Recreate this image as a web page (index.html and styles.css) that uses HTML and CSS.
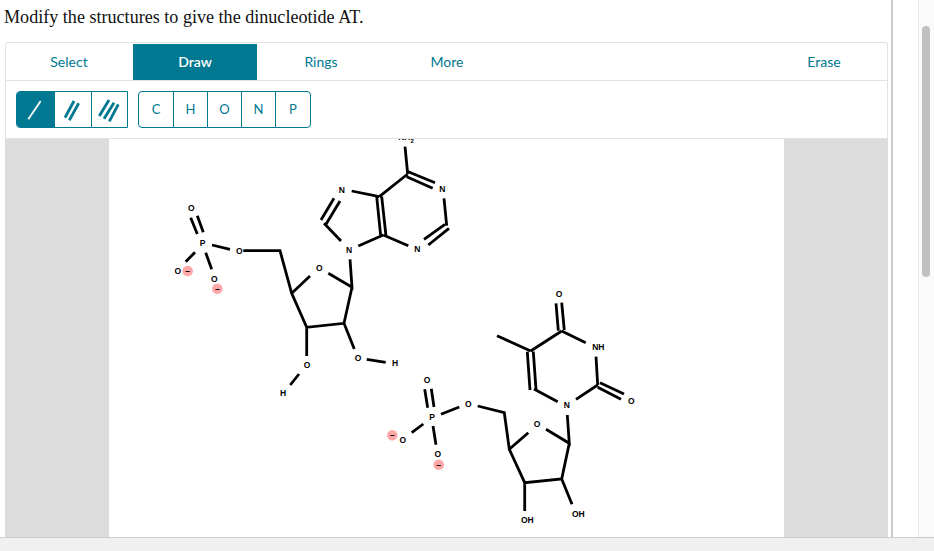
FILE: index.html
```html
<!DOCTYPE html>
<html lang="en">
<head>
<meta charset="utf-8">
<title>Modify the structures</title>
<link rel="stylesheet" href="styles.css">
</head>
<body>
<div class="window">
  <div class="main">
    <div class="content">
      <h1 class="question">Modify the structures to give the dinucleotide AT.</h1>
      <div class="editor">
        <nav class="tabs">
          <button class="tab">Select</button>
          <button class="tab is-active"><span>Draw</span></button>
          <button class="tab">Rings</button>
          <button class="tab">More</button>
          <button class="tab tab-end">Erase</button>
        </nav>
        <div class="tools">
          <div class="group bonds">
            <button class="tool bond is-active" aria-label="Single bond">
              <svg width="38" height="37" viewBox="0 0 38 37"><path d="M12.300 28.300L24.700 10"/></svg>
            </button>
            <button class="tool bond" aria-label="Double bond">
              <svg width="37" height="37" viewBox="0 0 37 37"><path d="M11 26.700L20 10M15.300 29.300L24.700 12.300"/></svg>
            </button>
            <button class="tool bond" aria-label="Triple bond">
              <svg width="37" height="37" viewBox="0 0 37 37"><path d="M8.300 25L18 9M13 27.700L23 11.700M18.300 30.300L27.300 13.300"/></svg>
            </button>
          </div>
          <div class="group atoms">
            <button class="tool atom">C</button>
            <button class="tool atom">H</button>
            <button class="tool atom">O</button>
            <button class="tool atom">N</button>
            <button class="tool atom">P</button>
          </div>
        </div>
        <div class="stage">
          <svg class="canvas" width="675" height="398" viewBox="109 139 675 398">
            <path class="bond-line" d="M405 146.700L407.700 174M408.300 171.700L435 182.700M406.700 176.700L432.700 188.300M407.700 174L379.300 196.700M376.700 196.700L380.700 236M381.700 196.700L386 236M379.300 196.700L351.700 191M334 198.300L321 220M340 201L326 224.300M324 223.300L341 241M358.300 246L383.300 235M383.300 235L408.300 245.700M424 239.300L445 224.300M428.300 245L449 228.300M446.700 225.700L444 198.300M350 259.300L352 287.300L328.300 273.300M310 276L291.700 293.300L306.700 327.300L344 323.300L352 287.300M291.700 293.300L280 250.700L243.300 250.700M230 249.300L212 245M190.700 217.700L197.300 234M197.300 215.700L203.300 232.300M195 252.300L185.700 261.700M205.700 252.700L211.700 269.300M306.700 327.300L306.700 356M344 323.300L354.300 349M366.700 359.300L385.700 362.300M299 374L290.300 385"/>
            <path class="bond-line" d="M556 303.300L558.300 330.700M561.700 302.700L564.300 330M561.700 331L585.700 342.700M596 356.700L597.700 385M600 382.700L624 394M597.700 387.300L621 399.300M597.700 385L576 399.300M557.700 401.700L534 389M536 389.300L533.300 351.700M530 390L527.300 351.700M530.700 351L561.700 331M530.700 351L497 335.700M567.300 415L569.300 443.300L546 429.300M528.300 432.700L509.300 449.300L524.700 482.700L561.700 479L569.300 443.300M509.300 449.300L504.300 412.700L477.700 406M459.300 407L441 414.300M424.700 389.300L427.700 407.700M431.300 388.700L434 407M423.300 424L411.700 432.700M433 426L436 444.700M524.700 482.700L524.700 511M561.700 479L572 504.300"/>
            <g class="charge">
              <circle cx="187.700" cy="271" r="5.300"/>
              <circle cx="217.300" cy="288.700" r="5.300"/>
              <circle cx="392.300" cy="435.300" r="5.300"/>
              <circle cx="438.700" cy="464.700" r="5.300"/>
            </g>
            <g class="atom-label">
              <text x="406" y="140.300">NH<tspan class="sub" dy="2.200">2</tspan></text>
              <text x="191.300" y="211">O</text>
              <text x="202.700" y="246.300">P</text>
              <text x="239.300" y="254">O</text>
              <text x="177.700" y="274">O</text>
              <text x="187.700" y="274">–</text>
              <text x="214.300" y="282">O</text>
              <text x="217.300" y="291.700">–</text>
              <text x="319.300" y="271">O</text>
              <text x="349" y="253.300">N</text>
              <text x="341.700" y="193.300">N</text>
              <text x="442.300" y="192">N</text>
              <text x="417.300" y="252">N</text>
              <text x="307" y="368">O</text>
              <text x="283" y="396">H</text>
              <text x="358" y="361">O</text>
              <text x="395" y="366">H</text>
              <text x="559" y="297">O</text>
              <text x="598.300" y="350">NH</text>
              <text x="631.300" y="404">O</text>
              <text x="566.700" y="408">N</text>
              <text x="537" y="427">O</text>
              <text x="578.300" y="517">OH</text>
              <text x="527.300" y="523">OH</text>
              <text x="427" y="383">O</text>
              <text x="432" y="420">P</text>
              <text x="468.300" y="407.300">O</text>
              <text x="402.700" y="443.300">O</text>
              <text x="392.300" y="438.300">–</text>
              <text x="437.700" y="457">O</text>
              <text x="438.700" y="467.700">–</text>
            </g>
          </svg>
        </div>
      </div>
    </div>
    <div class="rule"></div>
    <div class="gutter"></div>
    <div class="scrollbar"><div class="thumb"></div></div>
  </div>
  <div class="footer"></div>
</div>
</body>
</html>
```
FILE: styles.css
```css
* { box-sizing: border-box; }
html, body { margin: 0; padding: 0; height: 100%; overflow: hidden; background: #fff; }
.window { display: flex; flex-direction: column; width: 934px; height: 551px; }
.main { display: flex; height: 538px; border-bottom: 1px solid #ccc; }
.content { width: 891px; padding: 0 3px 0 5px; display: flex; flex-direction: column; }
.question {
  margin: 0 0 0 -1px;
  height: 42px;
  padding-top: 6px;
  font: 400 18.100px/22px "Liberation Serif", "Times New Roman", serif;
  color: #111;
}
.editor {
  flex: 1;
  display: flex;
  flex-direction: column;
  min-height: 0;
  border: 1px solid #e2e2e2;
  border-bottom: 0;
  border-radius: 3px 3px 0 0;
}
.tabs { display: flex; height: 38px; padding-top: 1px; border-bottom: 1px solid #e2e2e2; }
.tab {
  width: 126px;
  height: 36px;
  padding: 0;
  border: 0;
  background: none;
  color: #007891;
  font: 400 14px/36px "Lato", sans-serif;
}
.tab.is-active { padding: 0 1px; color: #fff; font-weight: 600; }
.tab.is-active span { display: block; background: #007891; }
.tab-end { margin-left: auto; }
.tools { display: flex; gap: 10px; height: 57px; padding: 10px 0 0 10px; }
.group { display: flex; height: 37px; border: 1px solid #007891; }
.bonds { border-radius: 4px 0 0 4px; }
.atoms { border-radius: 4px; }
.tool {
  display: block;
  padding: 0;
  border: 0;
  background: #fff;
  color: #007891;
  border-left: 1px solid #007891;
}
.tool:first-child { border-left: 0; }
.bond { width: 37px; height: 35px; }
.bond:last-child { width: 36px; }
.bond svg { display: block; margin: -1px 0 0 -1px; }
.bond:first-child svg { margin-left: -1px; }
.bond path { fill: none; stroke: #007891; stroke-width: 2.800; }
.bond.is-active { background: #007891; border-radius: 3px 0 0 3px; }
.bond.is-active path { stroke: #fff; stroke-width: 1.800; }
.atom { width: 34px; height: 35px; font: 400 13px/35px "Lato", sans-serif; background: none; }
.atom:last-child { width: 35px; }
.stage {
  flex: 1;
  min-height: 0;
  display: flex;
  justify-content: center;
  margin: 0 -1px;
  background: #dcdcdc;
  border-top: 1px solid #e2e2e2;
}
.canvas { display: block; background: #fff; }
.bond-line { fill: none; stroke: #000; stroke-width: 2.800; stroke-linecap: butt; stroke-linejoin: miter; }
.charge circle { fill: #ffa8a8; }
.atom-label text {
  font: 700 8.500px "Liberation Sans", Arial, sans-serif;
  fill: #000;
  text-anchor: middle;
}
.atom-label .sub { font-size: 6px; }
.rule { width: 2px; background: #ccc; }
.gutter { width: 25px; }
.scrollbar { width: 16px; background: #fafafa; border-left: 1px solid #e8e8e8; padding: 26px 3px 0 3px; }
.thumb { width: 8px; height: 251px; border-radius: 4px; background: #c1c1c1; }
.footer { flex: 1; background: #f0f0f0; }
```
